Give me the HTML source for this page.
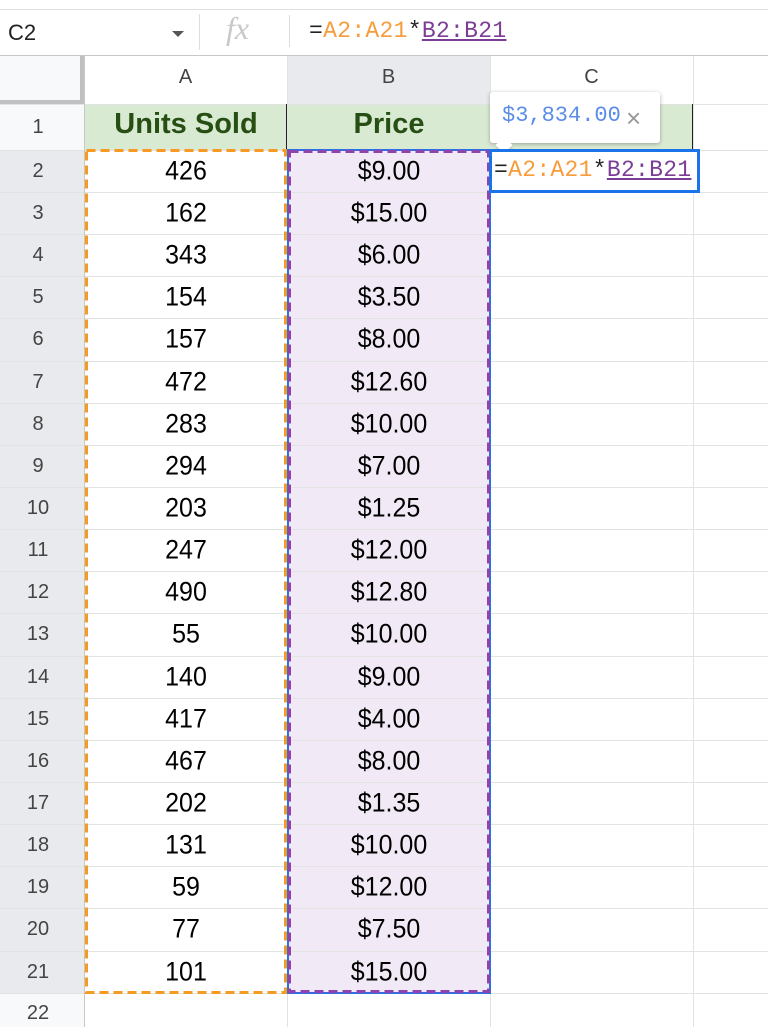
<!DOCTYPE html>
<html><head><meta charset="utf-8"><style>
*{margin:0;padding:0;box-sizing:border-box}
body{width:768px;height:1027px;overflow:hidden;background:#fff;font-family:"Liberation Sans",Arial,sans-serif;position:relative}
.a{position:absolute}
.hl{position:absolute;left:0;width:768px;height:1px;background:#e2e3e3}
.vl{position:absolute;top:56px;width:1px;height:971px;background:#e2e3e3}
.rh{position:absolute;left:0;width:84px;padding-right:8px;text-align:center;color:#444;font-size:20px;background:#e8eaed}
.c{position:absolute;text-align:center;font-size:25px;color:#000;transform:scaleY(1.08)}
.ca{left:85px;width:202px}
.cb{left:288px;width:202px}
.mono{font-family:"Liberation Mono","DejaVu Sans Mono",monospace}
</style></head><body>
<div class="a" style="top:0;left:0;width:768px;height:10px;background:#fff;border-bottom:1px solid #e0e0e0"></div>
<div class="a" style="left:8px;top:20px;font-size:22px;color:#222">C2</div>
<div class="a" style="left:172px;top:31px;width:0;height:0;border-left:6px solid transparent;border-right:6px solid transparent;border-top:6px solid #555"></div>
<div class="a" style="left:199px;top:14px;width:1px;height:36px;background:#ddd"></div>
<div class="a" style="left:226px;top:10px;font-size:32px;color:#c8c8c8;font-family:'Liberation Serif',serif;font-style:italic">fx</div>
<div class="a" style="left:289px;top:15px;width:1px;height:32px;background:#ddd"></div>
<div class="a mono" style="left:309px;top:18px;font-size:23px;letter-spacing:0.3px"><span style="color:#222">=</span><span style="color:#f89c3b">A2:A21</span><span style="color:#222">*</span><span style="color:#7b3d95;text-decoration:underline">B2:B21</span></div>
<div class="a" style="left:0;top:55px;width:768px;height:1px;background:#c8c8c8"></div>
<div class="a" style="left:0;top:56px;width:84px;height:48px;background:#f8f9fa;border-right:4px solid #c0c0c0;border-bottom:4px solid #c0c0c0"></div>
<div class="a" style="left:287px;top:56px;width:203px;height:48px;background:#e8eaed"></div>
<div class="a" style="left:84px;top:66px;width:203px;text-align:center;font-size:20px;color:#444">A</div>
<div class="a" style="left:287px;top:66px;width:203px;text-align:center;font-size:20px;color:#444">B</div>
<div class="a" style="left:490px;top:66px;width:203px;text-align:center;font-size:20px;color:#444">C</div>
<div class="a" style="left:85px;top:104px;width:608px;height:46px;background:#d9ead3"></div>
<div class="a" style="left:85px;top:108px;width:202px;text-align:center;font-size:29px;font-weight:bold;color:#274e13">Units Sold</div>
<div class="a" style="left:288px;top:108px;width:202px;text-align:center;font-size:29px;font-weight:bold;color:#274e13">Price</div>
<div class="a" style="left:288px;top:150px;width:202px;height:843px;background:#f1eaf6"></div>
<div class="rh" style="top:104px;height:46px;line-height:46px;background:#f8f9fa">1</div>
<div class="rh" style="top:150px;height:42px;line-height:42px">2</div>
<div class="rh" style="top:192px;height:42px;line-height:42px">3</div>
<div class="rh" style="top:234px;height:42px;line-height:42px">4</div>
<div class="rh" style="top:276px;height:42px;line-height:42px">5</div>
<div class="rh" style="top:318px;height:43px;line-height:42px">6</div>
<div class="rh" style="top:361px;height:42px;line-height:42px">7</div>
<div class="rh" style="top:403px;height:42px;line-height:42px">8</div>
<div class="rh" style="top:445px;height:42px;line-height:42px">9</div>
<div class="rh" style="top:487px;height:42px;line-height:42px">10</div>
<div class="rh" style="top:529px;height:42px;line-height:42px">11</div>
<div class="rh" style="top:571px;height:42px;line-height:42px">12</div>
<div class="rh" style="top:613px;height:43px;line-height:42px">13</div>
<div class="rh" style="top:656px;height:42px;line-height:42px">14</div>
<div class="rh" style="top:698px;height:42px;line-height:42px">15</div>
<div class="rh" style="top:740px;height:42px;line-height:42px">16</div>
<div class="rh" style="top:782px;height:42px;line-height:42px">17</div>
<div class="rh" style="top:824px;height:42px;line-height:42px">18</div>
<div class="rh" style="top:866px;height:42px;line-height:42px">19</div>
<div class="rh" style="top:908px;height:43px;line-height:42px">20</div>
<div class="rh" style="top:951px;height:42px;line-height:42px">21</div>
<div class="rh" style="top:993px;height:34px;line-height:40px;background:#f8f9fa">22</div>
<div class="hl" style="top:104px"></div>
<div class="hl" style="top:150px"></div><div class="hl" style="top:192px"></div><div class="hl" style="top:234px"></div><div class="hl" style="top:276px"></div><div class="hl" style="top:318px"></div><div class="hl" style="top:361px"></div><div class="hl" style="top:403px"></div><div class="hl" style="top:445px"></div><div class="hl" style="top:487px"></div><div class="hl" style="top:529px"></div><div class="hl" style="top:571px"></div><div class="hl" style="top:613px"></div><div class="hl" style="top:656px"></div><div class="hl" style="top:698px"></div><div class="hl" style="top:740px"></div><div class="hl" style="top:782px"></div><div class="hl" style="top:824px"></div><div class="hl" style="top:866px"></div><div class="hl" style="top:908px"></div><div class="hl" style="top:951px"></div><div class="hl" style="top:993px"></div>
<div class="vl" style="left:84px;background:#c8c8c8"></div><div class="vl" style="left:287px"></div><div class="vl" style="left:490px"></div><div class="vl" style="left:693px"></div>
<div class="a" style="left:286px;top:104px;width:1px;height:46px;background:#222"></div>
<div class="a" style="left:692px;top:104px;width:1px;height:46px;background:#222"></div>
<div class="c ca" style="top:157px">426</div>
<div class="c ca" style="top:199px">162</div>
<div class="c ca" style="top:241px">343</div>
<div class="c ca" style="top:283px">154</div>
<div class="c ca" style="top:325px">157</div>
<div class="c ca" style="top:368px">472</div>
<div class="c ca" style="top:410px">283</div>
<div class="c ca" style="top:452px">294</div>
<div class="c ca" style="top:494px">203</div>
<div class="c ca" style="top:536px">247</div>
<div class="c ca" style="top:578px">490</div>
<div class="c ca" style="top:620px">55</div>
<div class="c ca" style="top:663px">140</div>
<div class="c ca" style="top:705px">417</div>
<div class="c ca" style="top:747px">467</div>
<div class="c ca" style="top:789px">202</div>
<div class="c ca" style="top:831px">131</div>
<div class="c ca" style="top:873px">59</div>
<div class="c ca" style="top:915px">77</div>
<div class="c ca" style="top:958px">101</div>
<div class="c cb" style="top:157px">$9.00</div>
<div class="c cb" style="top:199px">$15.00</div>
<div class="c cb" style="top:241px">$6.00</div>
<div class="c cb" style="top:283px">$3.50</div>
<div class="c cb" style="top:325px">$8.00</div>
<div class="c cb" style="top:368px">$12.60</div>
<div class="c cb" style="top:410px">$10.00</div>
<div class="c cb" style="top:452px">$7.00</div>
<div class="c cb" style="top:494px">$1.25</div>
<div class="c cb" style="top:536px">$12.00</div>
<div class="c cb" style="top:578px">$12.80</div>
<div class="c cb" style="top:620px">$10.00</div>
<div class="c cb" style="top:663px">$9.00</div>
<div class="c cb" style="top:705px">$4.00</div>
<div class="c cb" style="top:747px">$8.00</div>
<div class="c cb" style="top:789px">$1.35</div>
<div class="c cb" style="top:831px">$10.00</div>
<div class="c cb" style="top:873px">$12.00</div>
<div class="c cb" style="top:915px">$7.50</div>
<div class="c cb" style="top:958px">$15.00</div>
<svg class="a" style="left:0;top:0" width="768" height="1027">
<rect x="86.5" y="150.5" width="199" height="842" fill="none" stroke="#f59a23" stroke-width="3" stroke-dasharray="9 5"/>
<rect x="288" y="150" width="202" height="843" fill="none" stroke="#2f6fe4" stroke-width="2"/>
<rect x="289.5" y="151.5" width="199" height="840" fill="none" stroke="#8e44ad" stroke-width="3" stroke-dasharray="9 5"/>
</svg>
<div class="a" style="left:490px;top:92px;width:170px;height:51px;background:#fff;border-radius:3px;box-shadow:0 1px 4px rgba(0,0,0,.3)"></div>
<div class="a" style="left:498px;top:139px;width:12px;height:12px;background:#fff;transform:rotate(45deg);box-shadow:2px 2px 3px rgba(0,0,0,.15)"></div>
<div class="a mono" style="left:502px;top:103px;font-size:22px;color:#5b8de8;letter-spacing:0px">$3,834.00</div>
<div class="a" style="left:626px;top:103px;font-size:26px;color:#999">×</div>
<div class="a" style="left:489px;top:149px;width:211px;height:44px;background:#fff;border:3px solid #1a73e8"></div>
<div class="a mono" style="left:494px;top:157px;font-size:23px;letter-spacing:0.3px"><span style="color:#222">=</span><span style="color:#f89c3b">A2:A21</span><span style="color:#222">*</span><span style="color:#7b3d95;text-decoration:underline">B2:B21</span></div>
</body></html>
